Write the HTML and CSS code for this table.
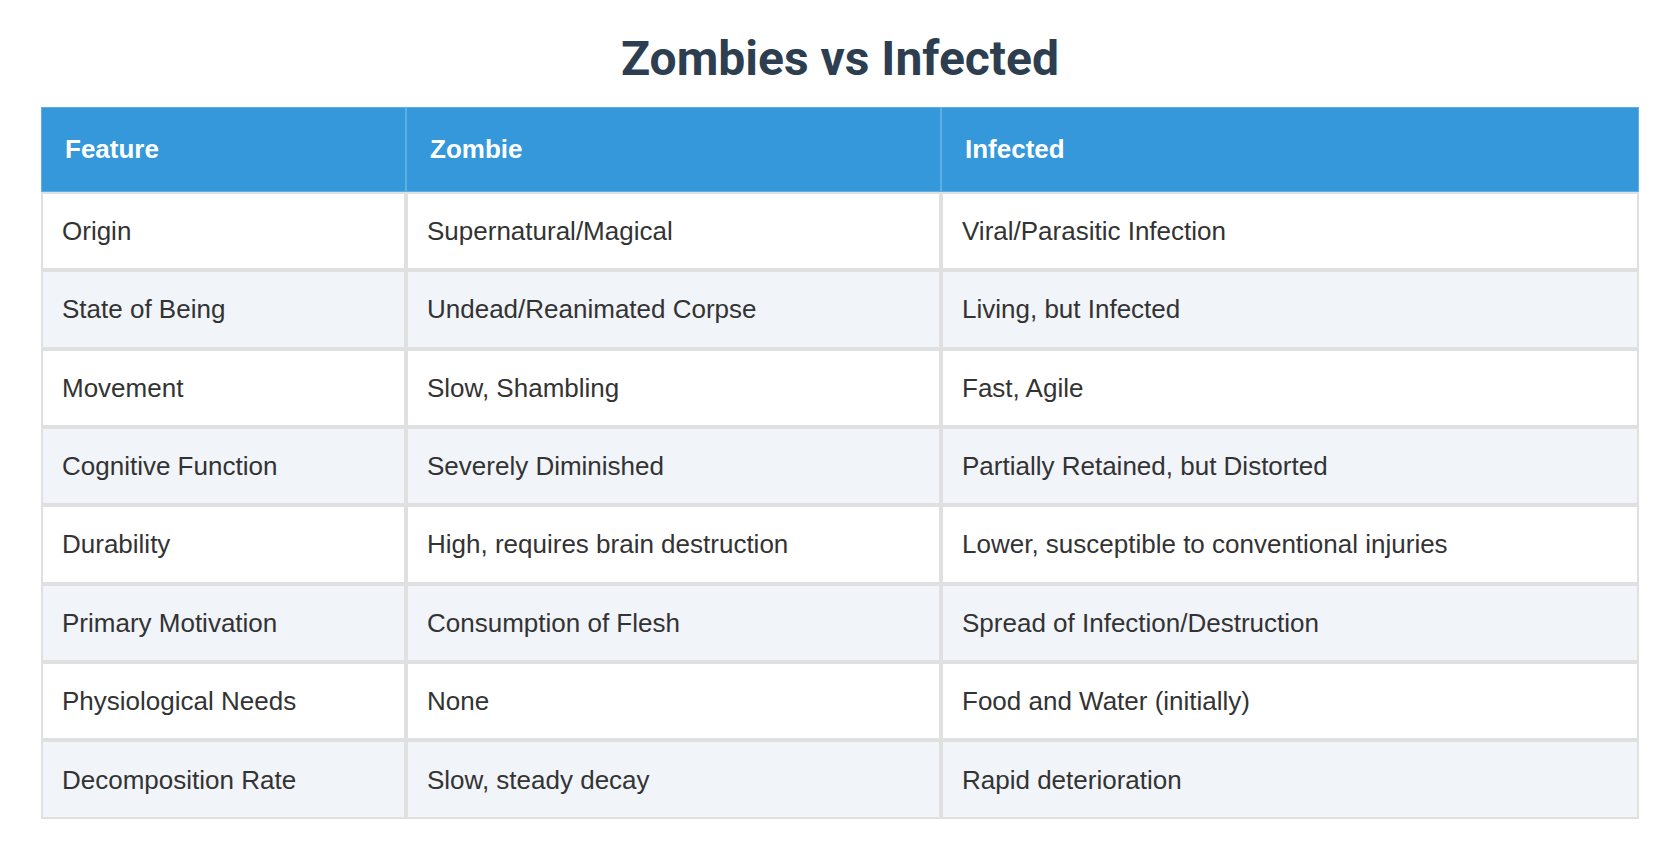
FILE: index.html
```html
<!DOCTYPE html>
<html lang="en">
<head>
<meta charset="utf-8">
<title>Zombies vs Infected</title>
<link rel="stylesheet" href="styles.css">
</head>
<body>
<main class="page">
  <h1 class="title">Zombies vs Infected</h1>
  <table class="compare">
    <colgroup>
      <col class="col-feature">
      <col class="col-zombie">
      <col class="col-infected">
    </colgroup>
    <thead>
      <tr><th>Feature</th><th>Zombie</th><th>Infected</th></tr>
    </thead>
    <tbody>
      <tr><td>Origin</td><td>Supernatural/Magical</td><td>Viral/Parasitic Infection</td></tr>
      <tr><td>State of Being</td><td>Undead/Reanimated Corpse</td><td>Living, but Infected</td></tr>
      <tr><td>Movement</td><td>Slow, Shambling</td><td>Fast, Agile</td></tr>
      <tr><td>Cognitive Function</td><td>Severely Diminished</td><td>Partially Retained, but Distorted</td></tr>
      <tr><td>Durability</td><td>High, requires brain destruction</td><td>Lower, susceptible to conventional injuries</td></tr>
      <tr><td>Primary Motivation</td><td>Consumption of Flesh</td><td>Spread of Infection/Destruction</td></tr>
      <tr><td>Physiological Needs</td><td>None</td><td>Food and Water (initially)</td></tr>
      <tr><td>Decomposition Rate</td><td>Slow, steady decay</td><td>Rapid deterioration</td></tr>
    </tbody>
  </table>
</main>
</body>
</html>
```
FILE: styles.css
```css
html, body {
  margin: 0;
  padding: 0;
  background: #ffffff;
}

body {
  font-family: "Liberation Sans", Arial, sans-serif;
  color: #333333;
}

.page {
  padding: 29.8px 41px 0;
}

.title {
  margin: 0 0 20px;
  font-family: Roboto, "Liberation Sans", sans-serif;
  font-weight: 700;
  font-size: 48px;
  line-height: normal;
  color: #2c3e50;
  text-align: center;
}

.compare {
  width: 100%;
  table-layout: fixed;
  border-collapse: separate;
  border-spacing: 0;
  font-size: 26px;
  line-height: 30px;
}

.col-feature { width: 365px; }
.col-zombie { width: 535px; }

.compare th {
  background: #3498db;
  color: #ffffff;
  font-weight: 700;
  text-align: left;
  padding: 26.5px 23px;
  border: 1px solid #5faee3;
}

.compare td {
  padding: 22.2px 19px;
  border: 2px solid #e0e0e0;
  text-align: left;
  background: #ffffff;
}

.compare tbody tr:nth-child(even) td {
  background: #f1f4f9;
}
```
